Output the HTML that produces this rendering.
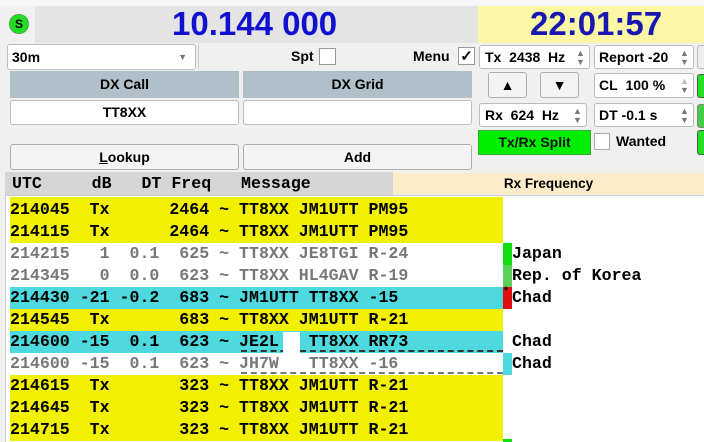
<!DOCTYPE html>
<html><head><meta charset="utf-8"><style>
*{margin:0;padding:0;box-sizing:border-box}
html,body{width:704px;height:442px;overflow:hidden}
body{background:#f0f0f0;position:relative;font-family:"Liberation Sans",sans-serif;font-weight:bold;font-size:14px;color:#000}
.a{position:absolute}
.box{position:absolute;background:#fff;border:1px solid #bcbcbc;border-radius:3px}
.btn{position:absolute;background:#f4f4f4;border:1px solid #adadad;border-radius:3px;text-align:center}
.hdr{position:absolute;background:#b0c0c8;text-align:center;line-height:27px}
.spin{position:absolute;right:3px;top:3px;width:11px;color:#777;font-size:9px;line-height:9px;text-align:center}
.mono{font-family:"Liberation Mono",monospace;font-weight:bold;font-size:16.6px;white-space:pre}
.row{position:absolute;left:10px;width:493px;height:22px;line-height:22px}
.y{background:#f0f000;color:#000}
.c{background:#4ed9de}
.g{color:#777}
.ct{position:absolute;left:512px;height:22px;line-height:22px}
.ind{position:absolute;left:503px;width:9px;height:22px}
</style></head><body>
<div class="a" style="left:0;top:0;width:704px;height:6px;background:#f6f6f6"></div>
<div class="a" style="left:35px;top:6px;width:443px;height:37px;background:#e4e4e4"></div>
<div class="a" style="left:9px;top:14px;width:20px;height:20px;border-radius:50%;background:#22dd22;border:1px solid #4a4;text-align:center;line-height:18px;font-size:12px">S</div>
<div class="a" style="left:172px;top:4px;font-size:33px;color:#1010d0;line-height:40px">10.144 000</div>
<div class="a" style="left:478px;top:6px;width:226px;height:37px;background:#fbf7a5"></div>
<div class="a" style="left:530px;top:4px;font-size:33px;color:#1818b0;line-height:40px">22:01:57</div>

<div class="box" style="left:7px;top:44px;width:189px;height:26px;line-height:24px;padding-left:4px">30m<span style="position:absolute;right:8px;top:0;color:#777;font-size:9px">▼</span></div>
<div class="a" style="left:198px;top:44px;width:1px;height:26px;background:#ccc"></div>
<div class="a" style="left:291px;top:48px">Spt</div>
<div class="a" style="left:319px;top:48px;width:17px;height:17px;background:#fff;border:1px solid #999"></div>
<div class="a" style="left:413px;top:48px">Menu</div>
<div class="a" style="left:458px;top:47px;width:17px;height:18px;background:#fff;border:1px solid #999;text-align:center;font-size:15px;line-height:17px">✓</div>

<div class="hdr" style="left:10px;top:71px;width:229px">DX Call</div>
<div class="hdr" style="left:243px;top:71px;width:229px">DX Grid</div>
<div class="box" style="left:10px;top:100px;width:229px;height:25px;text-align:center;line-height:23px">TT8XX</div>
<div class="box" style="left:243px;top:100px;width:229px;height:25px"></div>
<div class="btn" style="left:10px;top:144px;width:229px;height:26px;line-height:24px"><u>L</u>ookup</div>
<div class="btn" style="left:243px;top:144px;width:229px;height:26px;line-height:24px">Add</div>

<div class="box" style="left:479px;top:45px;width:111px;height:24px;line-height:22px;padding-left:5px">Tx&nbsp; 2438&nbsp; Hz<div class="spin">▲<br>▼</div></div>
<div class="box" style="left:594px;top:45px;width:100px;height:24px;line-height:22px;padding-left:4px">Report -20<div class="spin">▲<br>▼</div></div>
<div class="btn" style="left:488px;top:72px;width:39px;height:26px;line-height:24px">▲</div>
<div class="btn" style="left:540px;top:72px;width:39px;height:26px;line-height:24px">▼</div>
<div class="box" style="left:594px;top:73px;width:100px;height:25px;line-height:23px;padding-left:4px">CL&nbsp; 100 %<div class="spin" style="color:#bbb">▲<br><span style="color:#777">▼</span></div></div>
<div class="box" style="left:479px;top:103px;width:108px;height:24px;line-height:22px;padding-left:5px">Rx&nbsp; 624&nbsp; Hz<div class="spin">▲<br>▼</div></div>
<div class="box" style="left:594px;top:103px;width:100px;height:24px;line-height:22px;padding-left:4px">DT -0.1 s<div class="spin">▲<br>▼</div></div>
<div class="a" style="left:478px;top:130px;width:113px;height:25px;background:#00ee00;border:1px solid #3a3;text-align:center;line-height:23px;color:#111">Tx/Rx Split</div>
<div class="a" style="left:594px;top:133px;width:16px;height:17px;background:#fff;border:1px solid #aaa"></div>
<div class="a" style="left:616px;top:133px">Wanted</div>
<div class="a" style="left:697px;top:45px;width:10px;height:24px;background:#ececec;border:1px solid #bbb;border-radius:3px"></div>
<div class="a" style="left:697px;top:74px;width:10px;height:24px;background:#22e022;border:1px solid #555;border-radius:3px"></div>
<div class="a" style="left:697px;top:104px;width:10px;height:24px;background:#4c4;border:1px solid #888;border-radius:3px"></div>
<div class="a" style="left:697px;top:130px;width:10px;height:25px;background:#22e022;border:1px solid #555;border-radius:3px"></div>

<div class="a" style="left:5px;top:172px;width:388px;height:23px;background:#d6d6d6"></div>
<div class="a mono" style="left:12px;top:172px;line-height:23px">UTC     dB   DT Freq   Message</div>
<div class="a" style="left:393px;top:173px;width:311px;height:21px;background:#fcecca;text-align:center;line-height:21px;font-size:13.5px">Rx Frequency</div>
<div class="a" style="left:5px;top:195px;width:699px;height:247px;background:#fff;border-top:1px solid #ccc;border-left:1px solid #ccc"></div>
<div class="a y" style="left:10px;top:197px;width:493px;height:3px"></div>

<div class="mono">
<div class="row y" style="top:199px">214045  Tx      2464 ~ TT8XX JM1UTT PM95</div>
<div class="row y" style="top:221px">214115  Tx      2464 ~ TT8XX JM1UTT PM95</div>
<div class="row g" style="top:243px">214215   1  0.1  625 ~ TT8XX JE8TGI R-24</div>
<div class="row g" style="top:265px">214345   0  0.0  623 ~ TT8XX HL4GAV R-19</div>
<div class="row c" style="top:287px">214430 -21 -0.2  683 ~ JM1UTT TT8XX -15</div>
<div class="row y" style="top:309px">214545  Tx       683 ~ TT8XX JM1UTT R-21</div>
<div class="row c" style="top:331px">214600 -15  0.1  623 ~ JE2L   TT8XX RR73</div>
<div class="row g" style="top:353px">214600 -15  0.1  623 ~ JH7W   TT8XX -16</div>
<div class="row y" style="top:375px">214615  Tx       323 ~ TT8XX JM1UTT R-21</div>
<div class="row y" style="top:397px">214645  Tx       323 ~ TT8XX JM1UTT R-21</div>
<div class="row y" style="top:419px">214715  Tx       323 ~ TT8XX JM1UTT R-21</div>
<div class="a" style="left:241px;top:350px;width:262px;border-top:2px dashed #333"></div>
<div class="a" style="left:241px;top:372px;width:262px;border-top:2px dashed #777"></div>
<div class="a" style="left:283px;top:332px;width:17px;height:32px;background:#fff"></div>
<div class="ind" style="top:243px;background:#11dd11"></div>
<div class="ind" style="top:265px;background:#5ad05a"></div>
<div class="ind" style="top:287px;background:#e01010;color:#000;font-size:10px;line-height:12px">*</div>
<div class="ind" style="top:353px;background:#4ed9de"></div>
<div class="ct" style="top:243px">Japan</div>
<div class="ct" style="top:265px">Rep. of Korea</div>
<div class="ct" style="top:287px">Chad</div>
<div class="ct" style="top:331px">Chad</div>
<div class="ct" style="top:353px">Chad</div>
</div>
<div class="a" style="left:503px;top:439px;width:9px;height:3px;background:#1d1"></div>
</body></html>
